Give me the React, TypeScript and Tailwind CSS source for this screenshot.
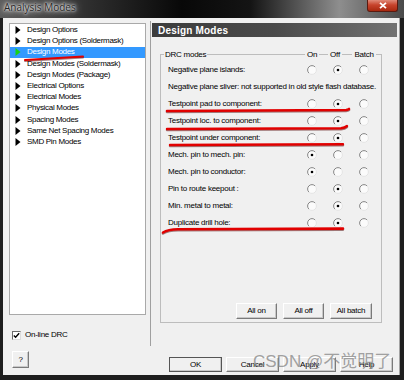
import React from "react";

const ui = "font-['Liberation_Sans',Arial,sans-serif] tracking-[-0.25px]";

const treeItems = [
  "Design Options",
  "Design Options (Soldermask)",
  "Design Modes",
  "Design Modes (Soldermask)",
  "Design Modes (Package)",
  "Electrical Options",
  "Electrical Modes",
  "Physical Modes",
  "Spacing Modes",
  "Same Net Spacing Modes",
  "SMD Pin Modes",
];

// value: 0 = On, 1 = Off, 2 = Batch, null = text only
const modes: { label: string; value: number | null }[] = [
  { label: "Negative plane islands:", value: 1 },
  { label: "Negative plane sliver: not supported in old style flash database.", value: null },
  { label: "Testpoint pad to component:", value: 1 },
  { label: "Testpoint loc. to component:", value: 1 },
  { label: "Testpoint under component:", value: 1 },
  { label: "Mech. pin to mech. pin:", value: 0 },
  { label: "Mech. pin to conductor:", value: 0 },
  { label: "Pin to route keepout :", value: 1 },
  { label: "Min. metal to metal:", value: 1 },
  { label: "Duplicate drill hole:", value: 1 },
];

const Radio = ({ on }: { on: boolean }) => (
  <svg width="10" height="10" viewBox="0 0 10 10">
    <circle cx="5" cy="5" r="4.3" fill="#fbfbfb" />
    <path d="M1.9 8.1 A4.3 4.3 0 0 1 8.1 1.9" fill="none" stroke="#858585" strokeWidth="1" />
    <path d="M8.1 1.9 A4.3 4.3 0 0 1 1.9 8.1" fill="none" stroke="#e4e4e4" strokeWidth="1" />
    {on && <circle cx="5" cy="5" r="1.3" fill="#000" />}
  </svg>
);

const Arrow = ({ green }: { green?: boolean }) => (
  <svg width="6" height="8" viewBox="0 0 6 8">
    <path d="M0.5 0 L5.5 4 L0.5 8 Z" fill={green ? "#19d219" : "#000"} />
  </svg>
);

const Btn = ({ label, w, def }: { label: string; w: string; def?: boolean }) => (
  <div
    className={`${w} flex items-center justify-center bg-[#f0f0f0] text-[8px] text-black border ${
      def
        ? "border-[#555]"
        : "border-t-white border-l-white border-b-[#7a7a7a] border-r-[#7a7a7a]"
    } shadow-[inset_-1px_-1px_0_#c8c8c8]`}
  >
    {label}
  </div>
);

export default function App() {
  return (
    <div className={`relative w-[404px] h-[380px] overflow-hidden bg-[#1e1e1e] flex flex-col ${ui}`}>
      {/* title bar */}
      <div className="h-[18px] flex justify-between items-start pl-[4px] pr-[6px] bg-[linear-gradient(90deg,#5c5c5c_0%,#2e2e2e_22%,#080808_45%,#141414_62%,#8e8e8e_84%,#4a4a4a_100%)]">
        <span className="mt-[1px] text-[10px] leading-[12px] tracking-normal text-[#262626] font-['Open_Sans','Liberation_Sans',sans-serif] [text-shadow:0_0_2px_#fff,0_0_4px_#fff,0_0_8px_#eee]">
          Analysis Modes
        </span>
        <div className="w-[31px] h-[12px] rounded-b-[3px] border border-t-0 border-[#5a1a10] bg-[linear-gradient(180deg,#e08a78_0%,#c7432c_45%,#a8280f_100%)] flex items-center justify-center">
          <svg width="8" height="7" viewBox="0 0 8 7">
            <path d="M1 0.8 L7 6.2 M7 0.8 L1 6.2" stroke="#fff" strokeWidth="1.8" />
          </svg>
        </div>
      </div>

      {/* body */}
      <div className="flex-1 ml-[3px] mr-[4px] mb-[5px] bg-[#f0f0f0] border-r border-[#a3a3a3] flex flex-col">
        <div className="h-[328px] pt-[3px] flex">
          {/* left column */}
          <div className="w-[147px] pl-[6px] pt-[2px] flex flex-col">
            <div className="w-[137px] h-[292px] bg-white border border-[#a9a9a9] pt-[0.5px]">
              {treeItems.map((t, i) => (
                <div
                  key={t}
                  className={`h-[11.2px] flex items-center pl-[5px] gap-[6px] text-[8px] tracking-[-0.3px] ${
                    i === 2 ? "bg-[#3399ff] text-white" : "text-black"
                  }`}
                >
                  <Arrow green={i === 2} />
                  <span>{t}</span>
                </div>
              ))}
            </div>
            <div className="mt-[14px] ml-[3px] flex items-center gap-[4px]">
              <div className="w-[9px] h-[9px] bg-white border border-t-[#6a6a6a] border-l-[#6a6a6a] border-b-[#dcdcdc] border-r-[#dcdcdc] flex items-center justify-center">
                <svg width="7" height="7" viewBox="0 0 7 7">
                  <path d="M0.8 3.4 L2.6 5.2 L6.2 1.2" fill="none" stroke="#000" strokeWidth="1.4" />
                </svg>
              </div>
              <span className="text-[8px] text-black">On-line DRC</span>
            </div>
          </div>

          {/* right panel */}
          <div className="w-[247px] border-l border-[#a0a0a0] pl-[1px] pt-[2px] flex flex-col">
            <div className="h-[14px] bg-[linear-gradient(90deg,#3c3c3c_0%,#4a4a4a_50%,#727272_100%)] flex items-center pl-[6px]">
              <span className="text-[10px] font-bold text-white tracking-[0.2px]">Design Modes</span>
            </div>

            {/* group box */}
            <div className="relative mt-[17px] ml-[8px] w-[222px] h-[269px] border border-[#bdbdbd] flex flex-col">
              <div className="absolute -top-[6px] left-[3px] right-[4px] h-[11px] flex items-center text-[8px] text-black">
                <span className="bg-[#f0f0f0] px-[1px]">DRC modes</span>
                <div className="flex-1" />
                <div className="w-[26px] flex justify-center">
                  <span className="bg-[#f0f0f0] px-[2px]">On</span>
                </div>
                <div className="w-[26px] flex justify-center pr-[6px]">
                  <span className="bg-[#f0f0f0] px-[2px]">Off</span>
                </div>
                <div className="w-[26px] flex justify-center">
                  <span className="bg-[#f0f0f0] px-[2px]">Batch</span>
                </div>
              </div>

              <div className="pt-[6.5px] pl-[7px] pr-[4px] flex flex-col">
                {modes.map((m) => (
                  <div key={m.label} className="h-[17px] flex items-center text-[8px] text-black">
                    <span className="flex-1 whitespace-nowrap">{m.label}</span>
                    {m.value !== null &&
                      [0, 1, 2].map((c) => (
                        <div key={c} className="w-[26px] flex justify-center">
                          <Radio on={m.value === c} />
                        </div>
                      ))}
                  </div>
                ))}
              </div>

              <div className="mt-auto pb-[3px] pr-[9px] flex justify-end gap-[6px]">
                <Btn label="All on" w="w-[41px] h-[16px]" />
                <Btn label="All off" w="w-[41px] h-[16px]" />
                <Btn label="All batch" w="w-[42px] h-[16px]" />
              </div>
            </div>
          </div>
        </div>

        {/* bottom buttons */}
        <div className="flex-1 flex justify-between pl-[9px] pr-[6px]">
          <div className="mt-[5px]">
            <Btn label="?" w="w-[17px] h-[17px]" />
          </div>
          <div className="mt-[11px] flex gap-[4px]">
            <Btn label="OK" w="w-[53px] h-[15px]" def />
            <Btn label="Cancel" w="w-[53px] h-[15px]" />
            <Btn label="Apply" w="w-[53px] h-[15px]" />
            <Btn label="Help" w="w-[53px] h-[15px]" />
          </div>
        </div>
      </div>

      {/* watermark */}
      <div className="absolute left-[253px] top-[352px] text-[17px] leading-[20px] tracking-normal text-[#8a8a8a]/80 font-['Liberation_Sans','Noto_Sans_CJK_SC',sans-serif] pointer-events-none">
        CSDN @不觉明了
      </div>

      {/* red annotation strokes */}
      <svg className="absolute left-0 top-0 pointer-events-none" width="404" height="380" viewBox="0 0 404 380">
        <g fill="none" stroke="#e10000" strokeLinecap="round" style={{ filter: "drop-shadow(0 1px 0.5px rgba(80,0,0,0.5))" }}>
          <path d="M25 60 Q50 58.5 83 56.5" strokeWidth="2" />
          <path d="M167 111 L346 110 Q348 109.8 349 109" strokeWidth="2.6" />
          <path d="M167 129 L341 128.3 Q345 127.8 347 126" strokeWidth="2.4" />
          <path d="M170 145 L343 144.2" strokeWidth="2.4" />
          <path d="M163 232.5 Q168 229.5 178 229.3 L343 228.6" strokeWidth="2.6" />
        </g>
      </svg>
    </div>
  );
}
